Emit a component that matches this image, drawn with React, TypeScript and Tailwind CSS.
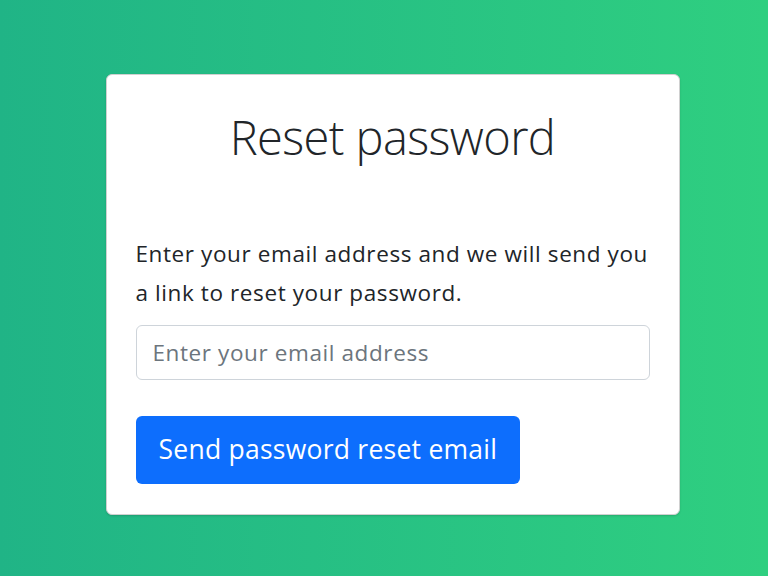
export default function App() {
  return (
    <div
      className="w-[768px] h-[576px] bg-gradient-to-r from-[#20b486] to-[#2fcf80] flex items-start justify-center pt-[74px]"
      style={{ fontFamily: '"Open Sans", "Noto Sans", sans-serif' }}
    >
      <div className="ml-[17px] w-[574px] h-[441px] bg-white rounded-[6px] border border-[#d0d0d0] shadow-[0_1px_2px_rgba(0,0,0,0.15)] px-[29px] pt-[30px]">
        <h1 className="text-center text-[47px] font-light text-[#212529] leading-[64px] tracking-[-0.6px]">
          Reset password
        </h1>
        <p className="mt-[65px] text-[22.5px] leading-[39px] text-[#212529] tracking-[0.6px]">
          Enter your email address and we will send you a link to reset your password.
        </p>
        <div className="mt-[13px] h-[55px] border border-[#ced4da] rounded-[6px] flex items-center px-[16px] text-[22.5px] text-[#6c757d] tracking-[0.6px]">
          Enter your email address
        </div>
        <button className="mt-[36px] h-[68px] px-[23px] bg-[#0d6efd] text-white rounded-[6px] text-[26.5px] tracking-[0.25px]">
          Send password reset email
        </button>
      </div>
    </div>
  );
}
